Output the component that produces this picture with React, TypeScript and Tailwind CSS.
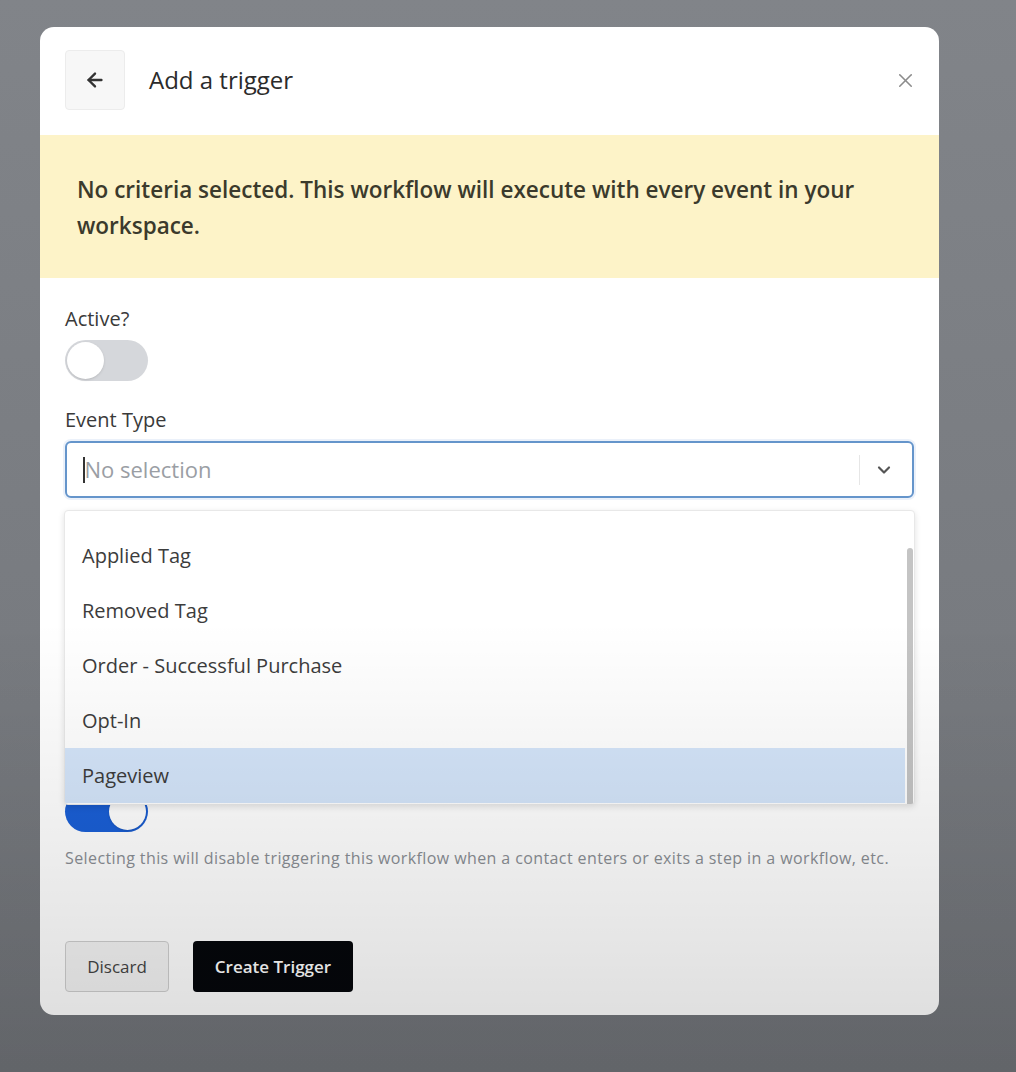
import { ArrowLeft, X, ChevronDown } from 'lucide-react';

const eventTypes = ['Applied Tag', 'Removed Tag', 'Order - Successful Purchase', 'Opt-In', 'Pageview'];

function Toggle({ on }: { on?: boolean }) {
  return (
    <div
      className={`flex h-[41px] w-[83px] items-center rounded-full p-[2px] ${
        on ? 'justify-end bg-[#1a5fd6]' : 'justify-start bg-[#d5d7db]'
      }`}
    >
      <div className="h-[37px] w-[37px] rounded-full bg-white shadow-sm" />
    </div>
  );
}

export default function App() {
  const highlighted = 'Pageview';

  return (
    <div
      className="relative min-h-[1072px] w-full overflow-hidden bg-gradient-to-b from-[#818489] to-[#72757a] pt-[27px] pl-[40px]"
      style={{ fontFamily: '"Open Sans", "Liberation Sans", sans-serif' }}
    >
      <div className="relative w-[899px] overflow-hidden rounded-[14px] bg-white">
        {/* Header */}
        <div className="flex h-[108px] items-start justify-between pl-[25px] pr-[22px] pt-[23px]">
          <div className="flex items-center gap-[24px]">
            <button className="flex h-[60px] w-[60px] items-center justify-center rounded-[4px] border border-[#ececec] bg-[#f7f7f7]">
              <ArrowLeft className="h-[22px] w-[22px] text-[#333]" strokeWidth={2.6} />
            </button>
            <h1 className="text-[24px] font-medium text-[#2b2b2b]">Add a trigger</h1>
          </div>
          <button className="mt-[19px] text-[#8c8c8c]">
            <X className="h-[23px] w-[23px]" strokeWidth={1.6} />
          </button>
        </div>

        {/* Warning banner */}
        <div className="h-[143px] bg-[#fdf3c8] px-[37px] pt-[37px]">
          <p className="max-w-[810px] text-[22.5px] font-semibold leading-[36px] text-[#3b3a2c]">
            No criteria selected. This workflow will execute with every event in your workspace.
          </p>
        </div>

        {/* Form */}
        <div className="relative px-[25px] pt-[29px] pb-[23px]">
          <label className="block text-[20px] leading-[24px] text-[#3a3a3a]">Active?</label>
          <div className="mt-[9px]">
            <Toggle />
          </div>

          <label className="mt-[27px] block text-[20px] leading-[24px] text-[#3a3a3a]">Event Type</label>
          <div className="mt-[9px] flex h-[57px] items-center rounded-[6px] border-2 border-[#6595cb] bg-white pl-[16px] pr-[18px] shadow-[0_0_0_2px_rgba(120,160,220,0.15)]">
            <span className="h-[26px] w-[1.5px] bg-[#333]" />
            <span className="flex-1 text-[22px] text-[#9a9ea4]">No selection</span>
            <span className="mr-[14px] h-[30px] w-px bg-[#e6e6e6]" />
            <ChevronDown className="h-[20px] w-[20px] text-[#555]" strokeWidth={2.6} />
          </div>

          {/* fields covered by the open menu */}
          <label className="invisible mt-[28px] block text-[20px] leading-[24px]">Tag</label>
          <div className="mt-[9px] h-[57px] rounded-[6px] border border-[#d0d0d0]" />
          <label className="invisible mt-[27px] block text-[20px] leading-[24px]">Campaign</label>
          <div className="mt-[9px] h-[57px] rounded-[6px] border border-[#d0d0d0]" />
          <label className="invisible mt-[25px] block text-[20px] leading-[24px]">Ignore workflow events?</label>
          <div className="mt-[9px]">
            <Toggle on />
          </div>

          <p className="mt-[15px] text-[16px] leading-[22px] tracking-[0.4px] text-[#8a8e94]">
            Selecting this will disable triggering this workflow when a contact enters or exits a step in a workflow, etc.
          </p>

          <div className="mt-[72px] flex gap-[24px]">
            <button className="h-[51px] w-[104px] rounded-[4px] border border-[#cfcfcf] bg-[#f4f4f4] text-[17px] text-[#444]">
              Discard
            </button>
            <button className="h-[51px] w-[160px] rounded-[4px] bg-[#05070b] text-[17px] font-semibold text-white">
              Create Trigger
            </button>
          </div>

          {/* Open dropdown menu */}
          <div className="absolute left-[24px] top-[232px] h-[295px] w-[851px] overflow-hidden rounded-[4px] border border-[#e8e8e8] bg-white shadow-[0_2px_6px_rgba(0,0,0,0.12)]">
            <ul className="pt-[17px] pr-[9px]">
              {eventTypes.map((t) => (
                <li
                  key={t}
                  className={`flex h-[55px] items-center px-[17px] text-[20px] text-[#3c3c3c] ${
                    t === highlighted ? 'bg-[#d4e5fa]' : ''
                  }`}
                >
                  {t}
                </li>
              ))}
            </ul>
            <div className="absolute right-[1px] top-[37px] h-[260px] w-[6px] rounded-full bg-[#c4c4c4]" />
          </div>
        </div>
      </div>

      {/* screen vignette */}
      <div className="pointer-events-none absolute inset-0 bg-[linear-gradient(to_bottom,transparent_58%,rgba(0,0,0,0.14)_100%)]" />
    </div>
  );
}
